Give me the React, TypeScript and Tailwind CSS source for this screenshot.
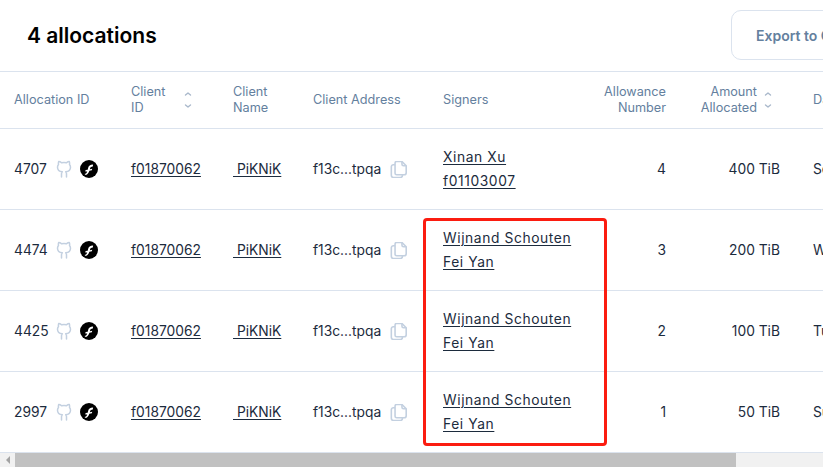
import React from 'react';

const rows = [
  { id: '4707', signers: ['Xinan Xu', 'f01103007'], num: '4', amount: '400 TiB', date: 'Sep 12, 2023' },
  { id: '4474', signers: ['Wijnand Schouten', 'Fei Yan'], num: '3', amount: '200 TiB', date: 'Wed Jul 5' },
  { id: '4425', signers: ['Wijnand Schouten', 'Fei Yan'], num: '2', amount: '100 TiB', date: 'Tue Jun 6' },
  { id: '2997', signers: ['Wijnand Schouten', 'Fei Yan'], num: '1', amount: '50 TiB', date: 'Sun May 7' },
];

const GithubIcon = () => (
  <svg width="16" height="18" viewBox="0 0 16 18" fill="none" stroke="#c3d0e0" strokeWidth="1.5" strokeLinecap="round" strokeLinejoin="round" className="shrink-0">
    <path d="M5.500 17v-3.200c0-.9.300-1.500.8-2-2.800-.3-4.800-1.500-4.800-4.600 0-1 .4-1.900 1-2.600-.2-.9-.2-2 .2-3.100 0 0 1.100-.1 3 1.300a9 9 0 0 1 4.600 0c1.900-1.400 3-1.300 3-1.300.4 1.100.4 2.200.2 3.100.6.700 1 1.600 1 2.600 0 3.100-2 4.300-4.800 4.600.5.500.8 1.100.8 2v3.200" />
  </svg>
);

const FilIcon = () => (
  <svg width="18" height="18" viewBox="0 0 18 18" className="shrink-0">
    <circle cx="9" cy="9" r="9" fill="#000" />
    <path d="M4.500 14c1.500-.4 2.300-1.300 2.700-2.600l-1.900.2.300-1.500 2.100-.3.400-1.800c.5-2 2-3.200 5-3.400l-.3 2c-1.500.1-2.400.5-2.700 1.700l-.2.900 2.300-.4-.3 1.500-2.500.4c-.7 2.200-2 3.700-3.600 4.200z" fill="#fff" />
  </svg>
);

const CopyIcon = () => (
  <svg width="17" height="17" viewBox="0.5 0.5 15.5 16" fill="none" stroke="#c3d0e0" strokeWidth="1.5" strokeLinejoin="round" className="shrink-0">
    <path d="M5 2.500a1.500 1.500 0 0 1 1.500-1.500h5l4 4v6.500a2 2 0 0 1-2 2h-7a1.500 1.500 0 0 1-1.500-1.500z" />
    <path d="M11.500 1v2.500a1.500 1.500 0 0 0 1.500 1.500h2.500" />
    <path d="M5 4h-1.500a2 2 0 0 0-2 2v8a2 2 0 0 0 2 2h6.500a2 2 0 0 0 2-2v-.5" />
  </svg>
);

const SortIcon = () => (
  <svg width="8" height="20" viewBox="0 0 8 20" fill="none" stroke="#a9b8cb" strokeWidth="1.4" strokeLinecap="round" strokeLinejoin="round" className="shrink-0">
    <path d="M1.500 5l2.500-2 2.500 2" />
    <path d="M1.500 15l2.500 2 2.500-2" />
  </svg>
);

const thClass = 'h-[56px] px-[14px] text-[12.7px] leading-[16px] font-normal text-[#64809e] text-left align-middle';
const tdClass = 'h-[81px] px-[14px] pt-[1px] text-[13.8px] text-[#1c2b3d] align-middle border-t border-[#dbe3ee]';

export default function App() {
  return (
    <div className="relative w-[823px] h-[467px] overflow-hidden bg-white font-['Inter',sans-serif]">
      <div className="flex items-center justify-between w-[923px] h-[72px] pl-[27px] border-b border-[#dbe3ee]">
        <h2 className="text-[21px] font-semibold text-black">4 allocations</h2>
        <button className="w-[192px] h-[50px] mb-[1px] rounded-[10px] border border-[#dbe3ee] text-left pl-[24px] text-[14px] font-semibold text-[#64809e]">
          Export to CSV
        </button>
      </div>

      <table className="table-fixed border-collapse w-[923px]">
        <colgroup>
          <col className="w-[117px]" />
          <col className="w-[102px]" />
          <col className="w-[80px]" />
          <col className="w-[130px]" />
          <col className="w-[160px]" />
          <col className="w-[91px]" />
          <col className="w-[114px]" />
          <col className="w-[129px]" />
        </colgroup>
        <thead>
          <tr>
            <th className={thClass}>Allocation ID</th>
            <th className={thClass}>
              <div className="flex items-center gap-[19px]">
                <span>Client<br />ID</span>
                <SortIcon />
              </div>
            </th>
            <th className={thClass}>Client<br />Name</th>
            <th className={thClass}>Client Address</th>
            <th className={thClass}>Signers</th>
            <th className={`${thClass} !text-right`}>Allowance<br />Number</th>
            <th className={`${thClass} !text-right`}>
              <div className="flex items-center justify-end gap-[7px] pr-[8px]">
                <span>Amount<br />Allocated</span>
                <SortIcon />
              </div>
            </th>
            <th className={`${thClass} !pl-[19px]`}>Date</th>
          </tr>
        </thead>
        <tbody>
          {rows.map((r) => (
            <tr key={r.id}>
              <td className={tdClass}>
                <div className="flex items-center gap-[8px]">
                  <span className="w-[34px]">{r.id}</span>
                  <GithubIcon />
                  <FilIcon />
                </div>
              </td>
              <td className={tdClass}><a className="underline underline-offset-2">f01870062</a></td>
              <td className={tdClass}><a className="underline underline-offset-2 whitespace-pre"> PiKNiK</a></td>
              <td className={tdClass}>
                <div className="flex items-center gap-[9px]">
                  <span>f13c...tpqa</span>
                  <CopyIcon />
                </div>
              </td>
              <td className={tdClass}>
                <div className="flex flex-col gap-[4px] items-start leading-[20px] tracking-[0.6px]">
                  {r.signers.map((s) => (
                    <a key={s} className="underline underline-offset-2">{s}</a>
                  ))}
                </div>
              </td>
              <td className={`${tdClass} text-right`}>{r.num}</td>
              <td className={`${tdClass} text-right`}>{r.amount}</td>
              <td className={`${tdClass} !pl-[19px] whitespace-nowrap`}>{r.date}</td>
            </tr>
          ))}
        </tbody>
      </table>

      {/* red annotation around the signers */}
      <div className="absolute left-[423px] top-[218px] w-[184px] h-[228px] border-[3px] border-[#fb1c10] rounded-[4px]" />

      {/* scrollbar */}
      <div className="absolute left-0 right-0 bottom-0 h-[15px] flex bg-[#f1f1f1] border-t border-[#dbe3ee]">
        <div className="w-[15px] flex items-center justify-center">
          <div className="w-0 h-0 border-y-[4px] border-y-transparent border-r-[4px] border-r-[#a3a3a3]" />
        </div>
        <div className="w-[721px] bg-[#c1c1c1]" />
      </div>
    </div>
  );
}
